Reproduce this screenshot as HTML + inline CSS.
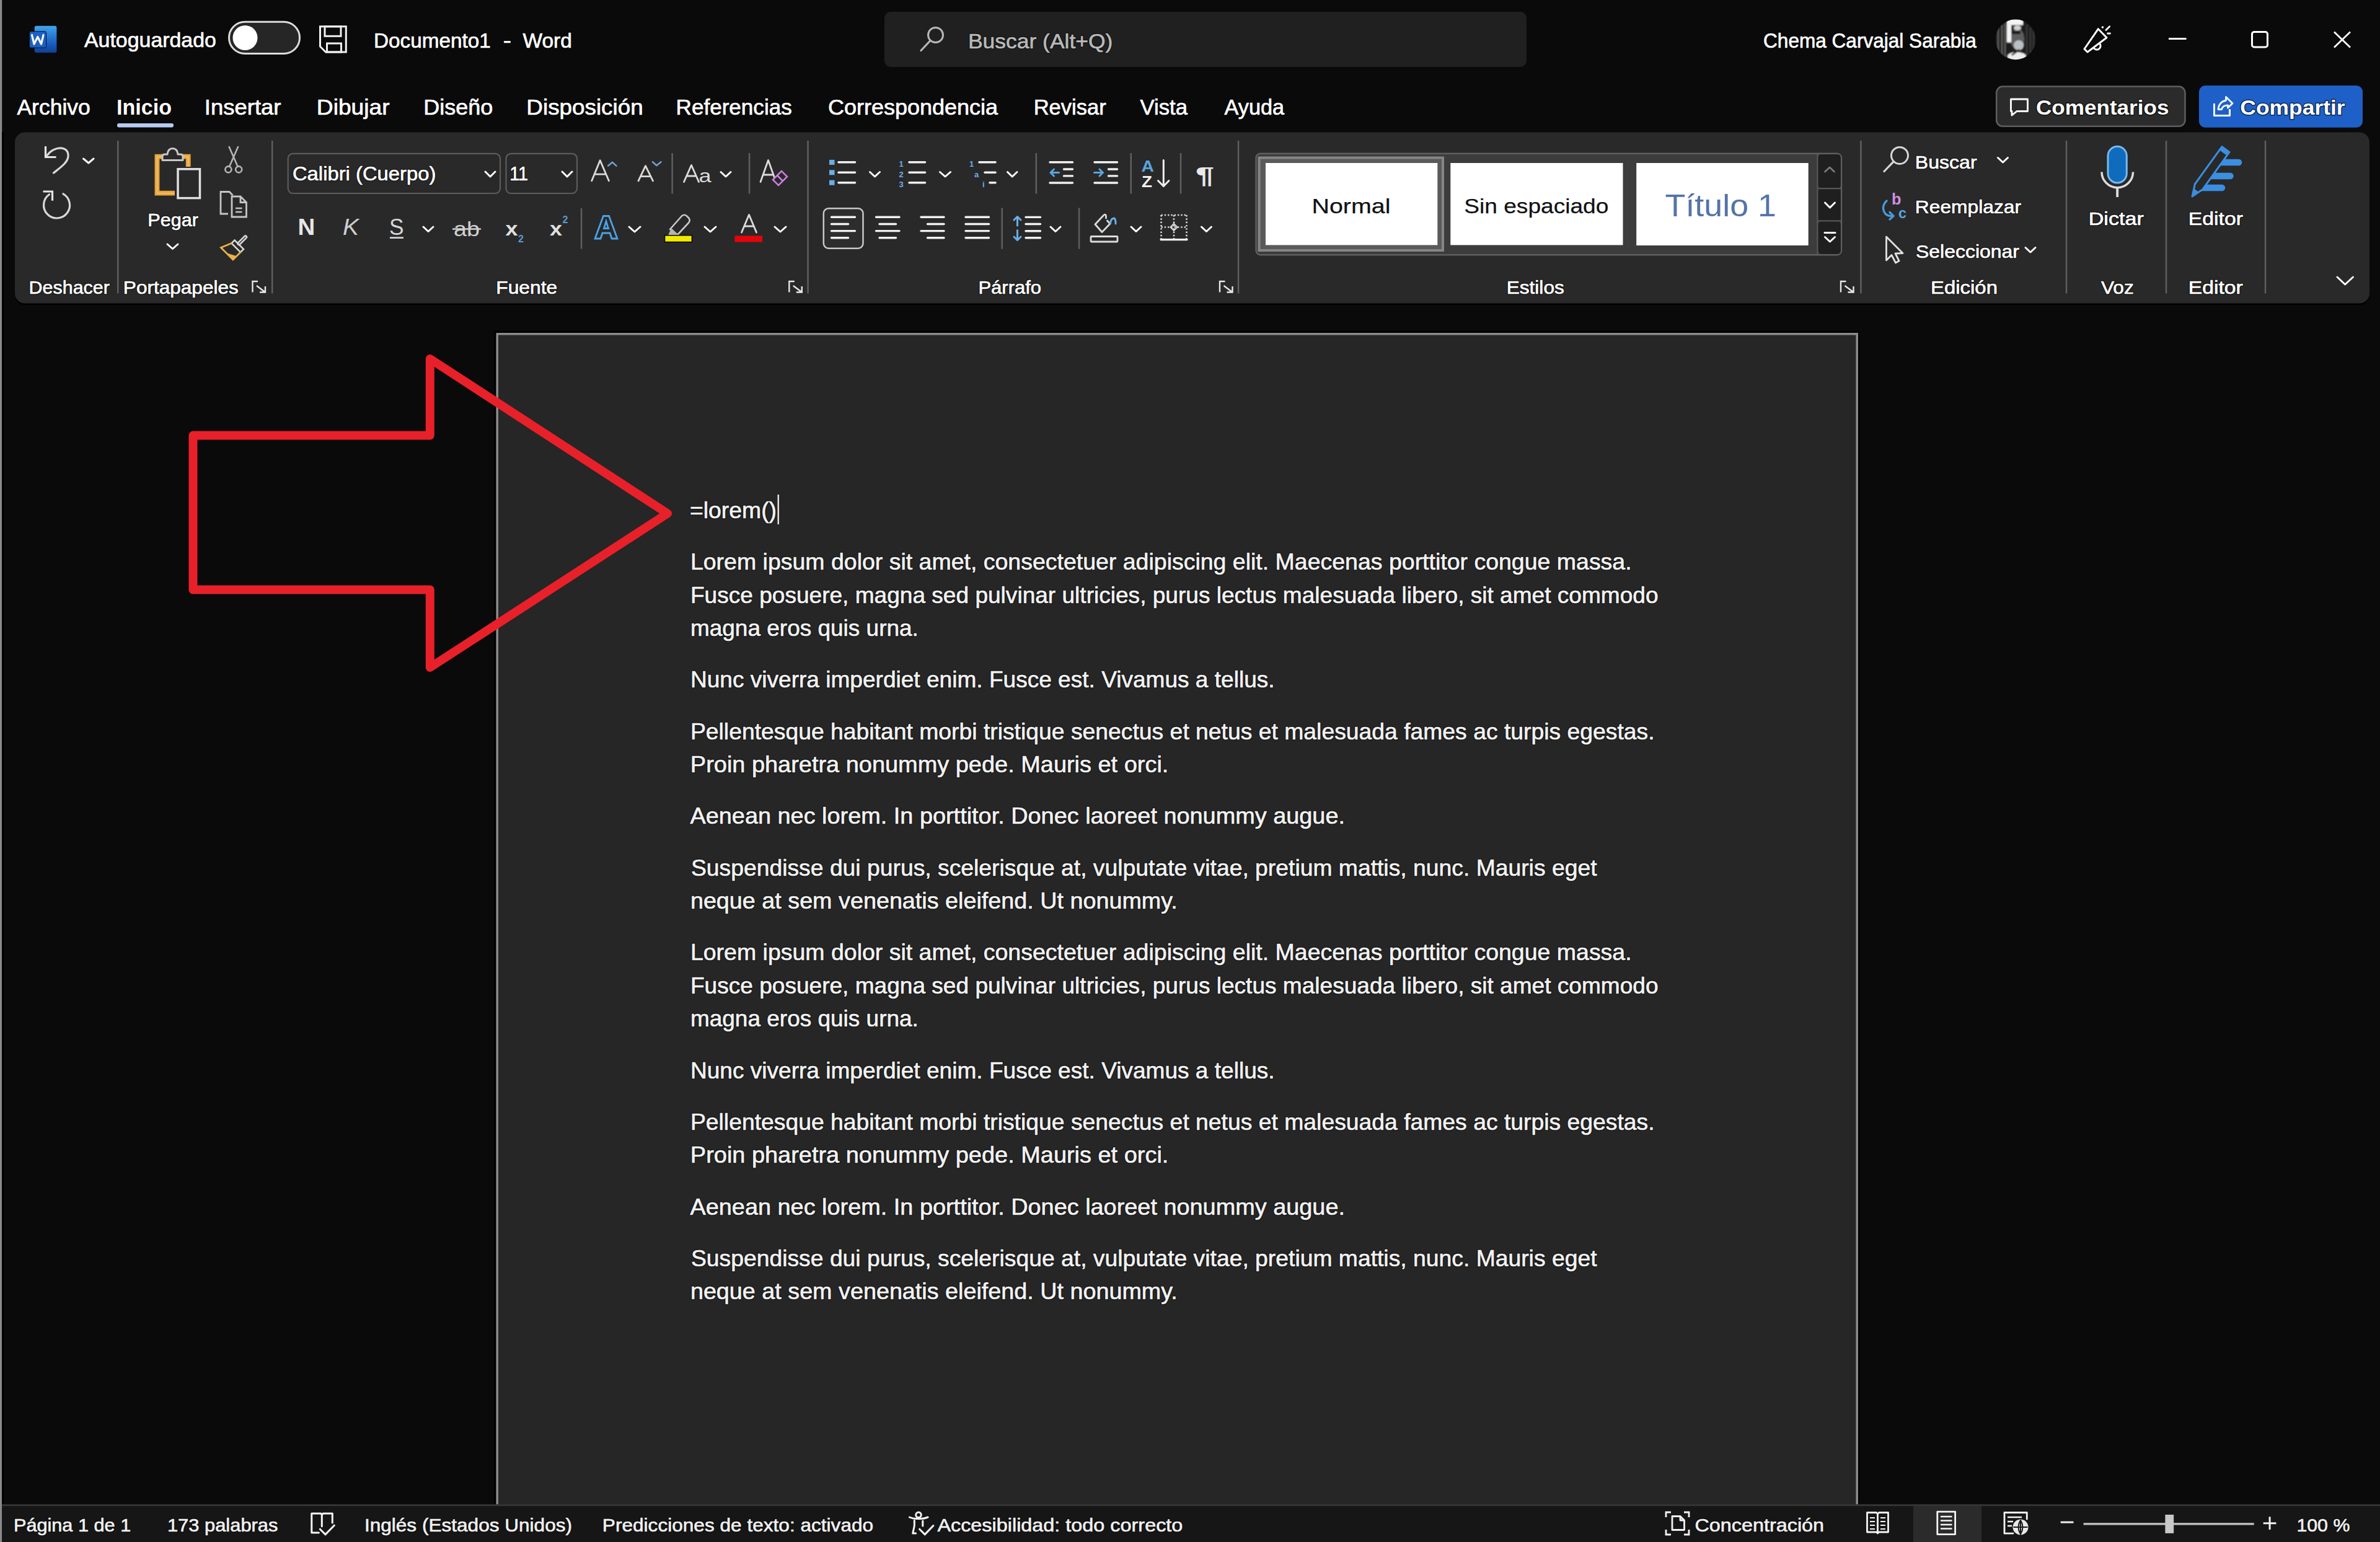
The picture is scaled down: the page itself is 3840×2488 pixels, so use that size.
<!DOCTYPE html>
<html><head><meta charset="utf-8"><title>Word</title>
<style>
html,body{margin:0;padding:0;background:#0a0a0a;width:3840px;height:2488px;overflow:hidden}
svg{position:absolute;left:0;top:0;display:block}
text{font-family:"Liberation Sans",sans-serif;white-space:pre}
</style></head><body>
<svg width="3840" height="2488" viewBox="0 0 3840 2488">
<defs>
<linearGradient id="wgrad" x1="0" y1="0" x2="0" y2="1">
<stop offset="0" stop-color="#41a5ee"/><stop offset="0.35" stop-color="#2b7cd3"/><stop offset="0.7" stop-color="#185abd"/><stop offset="1" stop-color="#103f91"/>
</linearGradient>
<radialGradient id="avgrad" cx="0.5" cy="0.45" r="0.6">
<stop offset="0" stop-color="#9a9a9a"/><stop offset="0.6" stop-color="#555"/><stop offset="1" stop-color="#222"/>
</radialGradient>
</defs>
<!-- backgrounds -->
<rect x="0" y="0" width="3840" height="2488" fill="#0a0a0a"/>
<rect x="0" y="0" width="3.2" height="2488" fill="#8a8a8a"/>
<rect x="3.2" y="213" width="3" height="2215" fill="#000"/>
<!-- ===== title bar ===== -->
<!-- word icon -->
<rect x="55.7" y="41.8" width="35.7" height="43.2" rx="3" fill="url(#wgrad)"/>
<rect x="47.5" y="50.7" width="27.1" height="26.4" rx="2.5" fill="#1d5fc2" stroke="#07122a" stroke-width="1"/>
<path d="M51.5 56.5 L55 71 L60.8 59.5 L66.5 71 L70 56.5" fill="none" stroke="#f4f8ff" stroke-width="3.2" stroke-linejoin="round" stroke-linecap="round"/>
<!-- toggle -->
<rect x="369.5" y="35.2" width="114" height="51.3" rx="25.6" fill="#262626" stroke="#dcdcdc" stroke-width="3"/>
<circle cx="395.5" cy="61" r="20" fill="#ffffff"/>
<!-- save icon -->
<path d="M516.5 42.8 H558.3 V84 H525.5 L516.5 75 Z" fill="none" stroke="#f0f0f0" stroke-width="3"/>
<rect x="524" y="42.8" width="26" height="15.5" fill="none" stroke="#f0f0f0" stroke-width="3"/>
<rect x="527.5" y="70" width="23" height="14" fill="none" stroke="#f0f0f0" stroke-width="3"/>
<!-- search box -->
<rect x="1427" y="19" width="1036" height="89" rx="10" fill="#202020"/>
<circle cx="1509.5" cy="56.5" r="12" fill="none" stroke="#b8b8b8" stroke-width="3"/>
<line x1="1501" y1="65.5" x2="1486" y2="81.5" stroke="#b8b8b8" stroke-width="3.2" stroke-linecap="round"/>
<!-- avatar -->
<clipPath id="avclip"><circle cx="3252" cy="63.8" r="32.5"/></clipPath>
<filter id="avblur" x="-10%" y="-10%" width="120%" height="120%"><feGaussianBlur stdDeviation="1.2"/></filter>
<g clip-path="url(#avclip)"><g filter="url(#avblur)">
<rect x="3218" y="30" width="68" height="68" fill="#1c1c1c"/>
<path d="M3224 45 V85 M3230 40 V90 M3235 38 V92" stroke="#5e5e5e" stroke-width="2.6"/>
<path d="M3270 40 V88 M3276 45 V85 M3281 50 V80" stroke="#3a3a3a" stroke-width="2.6"/>
<ellipse cx="3255" cy="63" rx="11" ry="17" fill="#5f5f5f"/>
<rect x="3238" y="30.5" width="26" height="10" fill="#f4f4f4"/>
<rect x="3238" y="30.5" width="7" height="38" fill="#f4f4f4"/>
<ellipse cx="3255" cy="45" rx="6" ry="4" fill="#d0d0d0"/>
<rect x="3246" y="50" width="14" height="5" fill="#1a1a1a"/>
<ellipse cx="3257" cy="73" rx="8" ry="8" fill="#b9c2c8"/>
<ellipse cx="3254" cy="91" rx="15" ry="7" fill="#ececec"/>
<path d="M3246 89 L3258 80" stroke="#111" stroke-width="2.5"/>
</g></g>
<!-- megaphone -->
<path d="M3385.4 46.7 L3363 79 L3368 84 L3399 60.7 Z" fill="none" stroke="#fff" stroke-width="3" stroke-linejoin="round"/>
<path d="M3378 77.5 A5.8 5.8 0 0 0 3388 70.5" fill="none" stroke="#fff" stroke-width="3"/>
<circle cx="3392.4" cy="44" r="1.8" fill="#fff"/>
<line x1="3397.9" y1="48.6" x2="3403.7" y2="42.8" stroke="#fff" stroke-width="2.8" stroke-linecap="round"/>
<line x1="3400.6" y1="54" x2="3404.5" y2="54" stroke="#fff" stroke-width="2.8" stroke-linecap="round"/>
<!-- window controls -->
<rect x="3499" y="61" width="28.5" height="3" fill="#fff"/>
<rect x="3633.5" y="51.5" width="25" height="24.5" rx="3.5" fill="none" stroke="#fff" stroke-width="3"/>
<path d="M3766 51.5 L3792 76.5 M3792 51.5 L3766 76.5" stroke="#fff" stroke-width="2.8"/>
<!-- tab underline -->
<rect x="189" y="199" width="91" height="6.5" rx="3" fill="#b4cbf2"/>
<!-- comentarios button -->
<rect x="3221.2" y="139.6" width="304.3" height="64.2" rx="10" fill="#2b2b2b" stroke="#5e5e5e" stroke-width="2.5"/>
<path d="M3244.5 160 H3271.5 V179.5 H3254 L3246 186 V179.5 H3244.5 Z" fill="none" stroke="#fff" stroke-width="2.8" stroke-linejoin="round"/>
<!-- compartir button -->
<rect x="3548" y="138" width="264" height="67.7" rx="10" fill="#1e60c8"/>
<path d="M3572.5 167 V186.5 H3597.5 V176" fill="none" stroke="#f2faff" stroke-width="3" stroke-linejoin="round"/>
<path d="M3579 176.5 C3579.5 168.5 3584.5 163 3591.5 162 L3591.5 156.5 L3602 166.8 L3594.5 174 V169.8 C3589 169.8 3585.5 172 3584.5 176.5 Z" fill="none" stroke="#f2faff" stroke-width="2.8" stroke-linejoin="round"/>
<!-- ===== ribbon ===== -->
<rect x="24" y="215" width="3799" height="277" rx="16" fill="#000"/>
<rect x="24" y="213.5" width="3799" height="276" rx="16" fill="#292929"/>
<g id="ribbon-seps" fill="#5f5f5f">
<rect x="189" y="227" width="2.5" height="246.5"/>
<rect x="438" y="227" width="2.5" height="246.5"/>
<rect x="1302.3" y="227" width="2.5" height="246.5"/>
<rect x="1996.8" y="227" width="2.5" height="246.5"/>
<rect x="3001.2" y="227" width="2.5" height="246.5"/>
<rect x="3332.8" y="227" width="2.5" height="246.5"/>
<rect x="3493.8" y="227" width="2.5" height="246.5"/>
<rect x="3653.8" y="227" width="2.5" height="246.5"/>
<rect x="936.8" y="336" width="2.5" height="65.5"/>
<rect x="1083.4" y="247" width="2.5" height="65.5"/>
<rect x="1207.8" y="247" width="2.5" height="65.5"/>
<rect x="1670.6" y="247" width="2.5" height="65.5"/>
<rect x="1823.5" y="247" width="2.5" height="65.5"/>
<rect x="1903.8" y="247" width="2.5" height="65.5"/>
<rect x="1615.5" y="335.5" width="2.5" height="66.2"/>
<rect x="1739.8" y="335.5" width="2.5" height="66.2"/>
</g>
<g fill="none" stroke-linecap="round" stroke-linejoin="round">
<!-- undo -->
<path d="M73.5 236 V253.5 H90.5" stroke="#e6e6e6" stroke-width="3.2" stroke-linecap="butt" stroke-linejoin="miter"/>
<path d="M75.5 251.5 C86 235, 111 234, 110 252 C109.5 262, 99 269, 86.5 279" stroke="#d9d9d9" stroke-width="3.2"/>
<path d="M134.5 256 L142.8 263 L151 256" stroke="#fff" stroke-width="3"/>
<!-- redo -->
<path d="M102 312.8 A21 21 0 1 1 79.5 313.8" stroke="#d9d9d9" stroke-width="3.2"/>
<path d="M69.5 309 H84.5 V323.7" stroke="#e6e6e6" stroke-width="3.2" stroke-linecap="butt" stroke-linejoin="miter"/>
<!-- paste -->
<path d="M282 311.7 H253.5 V252.7 H303.7 V269" stroke="#e9a53c" stroke-width="7.8" stroke-linecap="butt" stroke-linejoin="miter"/>
<path d="M282 311.7 H253.5 V252.7 H303.7 V269" stroke="#f6cf7e" stroke-width="2" stroke-linecap="butt" stroke-linejoin="miter" opacity="0.6"/>
<path d="M262 258.5 V252 Q262 249 266 249 H270 C271 241 275 239.5 278.5 239.5 C282 239.5 286 241 287 249 H291 Q295 249 295 252 V258.5 Z" stroke="#c8c8c8" stroke-width="3" fill="#292929"/>
<rect x="287" y="272.8" width="35.5" height="46.8" stroke="#e0e0e0" stroke-width="3.5" fill="#292929" stroke-linejoin="miter"/>
<path d="M270 394 L278.5 401.5 L287 394" stroke="#fff" stroke-width="3"/>
<!-- scissors -->
<path d="M369.7 237 L383.5 268.5 M384 237 L370.2 268.5" stroke="#b5b5b5" stroke-width="2.6"/>
<circle cx="368.4" cy="273.4" r="5" stroke="#b5b5b5" stroke-width="2.6"/>
<circle cx="385.2" cy="273.4" r="5" stroke="#b5b5b5" stroke-width="2.6"/>
<!-- copy -->
<path d="M368 345 H356 V309.5 H370 L375.5 315" stroke="#c4c4c4" stroke-width="2.8" stroke-linejoin="miter" stroke-linecap="butt"/>
<path d="M374 317 H388 L397.5 326.5 V350 H374 Z M388 317 V326.5 H397.5" stroke="#c4c4c4" stroke-width="2.8" stroke-linejoin="miter"/>
<path d="M380 336 H390.5 M380 342 H390.5" stroke="#c4c4c4" stroke-width="2.6" stroke-linecap="butt"/>
<!-- format painter -->
<path d="M396 382.5 L385.5 393" stroke="#d6d6d6" stroke-width="6.5"/>
<path d="M396 382.5 L385.5 393" stroke="#292929" stroke-width="1.2"/>
<path d="M378.5 387.5 L393 402 L388 407 L373.5 392.5 Z" stroke="#d6d6d6" stroke-width="2.6" stroke-linejoin="miter"/>
<path d="M373.5 392.5 L356.5 399.5 L376 419 L388 407" stroke="#e8b14a" stroke-width="2.8" stroke-linejoin="miter"/>
<path d="M365 408 L376 419 L381 413 Z" fill="#e8b14a" stroke="none"/>
<!-- dialog launchers -->
<g stroke="#e8e8e8" stroke-width="2.4" stroke-linecap="butt" stroke-linejoin="miter">
<path d="M416 454 H407.5 V471.5 M414 461 L428 471.5 M428 462 V471.5 H419"/>
<path d="M1281.8 454 H1273.3 V471.5 M1279.8 461 L1293.8 471.5 M1293.8 462 V471.5 H1284.8"/>
<path d="M1976.5 454 H1968 V471.5 M1974.5 461 L1988.5 471.5 M1988.5 462 V471.5 H1979.5"/>
<path d="M2978.5 454 H2970 V471.5 M2976.5 461 L2990.5 471.5 M2990.5 462 V471.5 H2981.5"/>
</g>
<!-- font boxes -->
<rect x="464.7" y="247.8" width="342.3" height="64.2" rx="8" stroke="#5c5c5c" stroke-width="2.2"/>
<rect x="816.5" y="247.8" width="114.5" height="64.2" rx="8" stroke="#5c5c5c" stroke-width="2.2"/>
<path d="M783 277 L791 285 L799 277" stroke="#fff" stroke-width="3"/>
<path d="M907 277 L915 285 L923 277" stroke="#fff" stroke-width="3"/>
<!-- grow/shrink font -->
<path d="M954.7 291.8 L968.2 258.8 L982.4 291.8 M960 281.2 H976.5" stroke="#dcdcdc" stroke-width="2.8"/>
<path d="M981.2 267.6 L988 261.8 L994.4 267.6" stroke="#6f9fcf" stroke-width="2.6"/>
<path d="M1030 291.8 L1041.5 267.6 L1053.5 291.8 M1035 284.7 H1048.5" stroke="#dcdcdc" stroke-width="2.8"/>
<path d="M1053 261.2 L1059.4 267 L1066.5 261.2" stroke="#6f9fcf" stroke-width="2.6"/>
<!-- Aa -->
<path d="M1103.5 293.5 L1115.5 266.5 L1127.5 293.5 M1108.5 284 H1122.5" stroke="#dcdcdc" stroke-width="2.8"/>
<path d="M1163 277.5 L1171 285 L1179 277.5" stroke="#fff" stroke-width="3"/>
<!-- clear formatting -->
<path d="M1227 293.5 L1239.5 258.5 L1252 293.5 M1232 282 H1246" stroke="#dcdcdc" stroke-width="2.8"/>
<path d="M1247 290 L1261 276 L1270 285 L1256 299 Z M1254 283 L1263 292" stroke="#c77fdc" stroke-width="2.6" stroke-linejoin="miter" fill="#292929"/>
<!-- underline chevrons row 2 -->
<path d="M683 366 L691 373.5 L699 366" stroke="#fff" stroke-width="3"/>
<path d="M1015 366 L1024 374 L1033 366" stroke="#fff" stroke-width="3"/>
<path d="M1137 366 L1146 374 L1155 366" stroke="#fff" stroke-width="3"/>
<path d="M1250 366 L1259 374 L1268 366" stroke="#fff" stroke-width="3"/>
<!-- underline S -->
<rect x="629" y="382.3" width="22" height="2.6" fill="#dcdcdc" stroke="none"/>
<!-- strikethrough -->
<path d="M731 369.5 H775" stroke="#d0d0d0" stroke-width="2.4"/>
<!-- highlighter -->
<path d="M1081 370 L1100 348.5 Q1104 345 1108 348.5 L1111.5 352 Q1114 356 1111 359.5 L1092 380" stroke="#c8c8c8" stroke-width="2.6"/>
<path d="M1083 368 L1094 378 L1084 382 L1077 382 Z" stroke="none" fill="#b5b5b5"/>
<rect x="1072.5" y="379.8" width="44" height="10.7" fill="#f2ea00" stroke="#050505" stroke-width="1.6"/>
<!-- font color -->
<path d="M1196.5 375 L1208.5 346.5 L1220.5 375 M1201 365 H1216" stroke="#dcdcdc" stroke-width="2.8"/>
<rect x="1185.4" y="380.4" width="44.6" height="10.1" fill="#e3050c" stroke="none"/>
<!-- text effects A -->
<path d="M960 385 L973.5 348.5 H982.5 L996 385 H987 L984 376 H972 L969 385 Z M974.5 368.5 H981.5 L978 357 Z" stroke="#4aa3e8" stroke-width="2.8" stroke-linejoin="miter" fill="#292929"/>
</g>
<!-- font group glyphs -->
<g font-family="Liberation Sans" fill="#e6e6e6">
<text x="480.5" y="379.4" font-size="37.5" font-weight="700" textLength="27.8" lengthAdjust="spacingAndGlyphs">N</text>
<text x="553" y="379.4" font-size="37" font-style="italic" textLength="26" lengthAdjust="spacingAndGlyphs" fill="#cfcfcf">K</text>
<text x="628" y="379.4" font-size="37" textLength="23.5" lengthAdjust="spacingAndGlyphs" fill="#d6d6d6">S</text>
<text x="732" y="380.5" font-size="34" textLength="42" lengthAdjust="spacingAndGlyphs" fill="#d0d0d0">ab</text>
<text x="815.5" y="380" font-size="32" font-weight="700" textLength="20" lengthAdjust="spacingAndGlyphs" fill="#e0e0e0">x</text>
<text x="836" y="391" font-size="16" fill="#5a9bd0" font-weight="700">2</text>
<text x="887" y="380" font-size="32" font-weight="700" textLength="20" lengthAdjust="spacingAndGlyphs" fill="#e0e0e0">x</text>
<text x="907.5" y="360" font-size="16" fill="#5a9bd0" font-weight="700">2</text>
<text x="1127.5" y="293.8" font-size="30" textLength="20" lengthAdjust="spacingAndGlyphs" fill="#dcdcdc">a</text>
</g>
<!-- ===== paragraph group ===== -->
<g fill="none" stroke-linecap="round" stroke-linejoin="round">
<!-- bullets -->
<g fill="#6aaee8" stroke="none">
<rect x="1338" y="257.9" width="8.5" height="8"/><rect x="1338" y="274.3" width="8.5" height="8"/><rect x="1338" y="290.7" width="8.5" height="8"/>
</g>
<path d="M1353 261.7 H1379.5 M1353 278.2 H1379.5 M1353 294.7 H1379.5" stroke="#f0f0f0" stroke-width="3.6"/>
<path d="M1403.5 277.5 L1411.5 285 L1419.5 277.5" stroke="#fff" stroke-width="3"/>
<path d="M1467 261.7 H1492.5 M1467 278.2 H1492.5 M1467 294.7 H1492.5" stroke="#f0f0f0" stroke-width="3.6"/>
<path d="M1516.5 277.5 L1525 285 L1533.5 277.5" stroke="#fff" stroke-width="3"/>
<path d="M1580 261.7 H1606 M1589 278.2 H1606 M1597 294.7 H1606" stroke="#f0f0f0" stroke-width="3.6"/>
<path d="M1625.5 277.5 L1633.2 285 L1641 277.5" stroke="#fff" stroke-width="3"/>
<!-- indent -->
<path d="M1694 261.7 H1730.5 M1716.5 273 H1730.5 M1716.5 283.9 H1730.5 M1694 295 H1730.5" stroke="#f0f0f0" stroke-width="3.4"/>
<path d="M1708.5 278.5 H1695 M1700.5 273 L1695 278.5 L1700.5 284" stroke="#5aa5e0" stroke-width="3"/>
<path d="M1766 261.7 H1802.5 M1788.5 273 H1802.5 M1788.5 283.9 H1802.5 M1766 295 H1802.5" stroke="#f0f0f0" stroke-width="3.4"/>
<path d="M1765.5 278.5 H1779.5 M1774 273 L1779.5 278.5 L1774 284" stroke="#5aa5e0" stroke-width="3"/>
<!-- sort -->
<path d="M1877.3 258.5 V300.5 M1868.5 291.5 L1877.3 300.5 L1886 291.5" stroke="#f0f0f0" stroke-width="3"/>
<!-- align -->
<rect x="1328.8" y="336.2" width="63.7" height="64.5" rx="8" stroke="#c8c8c8" stroke-width="2.5" fill="#2d2d2d"/>
<path d="M1341.5 350.2 H1379.5 M1341.5 361.5 H1368.5 M1341.5 372.6 H1379.5 M1341.5 383.8 H1368.5" stroke="#f0f0f0" stroke-width="3.4"/>
<path d="M1413.5 350.2 H1451 M1419 361.5 H1445.5 M1413.5 372.6 H1451 M1419 383.8 H1445.5" stroke="#f0f0f0" stroke-width="3.4"/>
<path d="M1486 350.2 H1523 M1496.5 361.5 H1523 M1486 372.6 H1523 M1496.5 383.8 H1523" stroke="#f0f0f0" stroke-width="3.4"/>
<path d="M1558 350.2 H1595.5 M1558 361.5 H1595.5 M1558 372.6 H1595.5 M1558 383.8 H1595.5" stroke="#f0f0f0" stroke-width="3.4"/>
<!-- line spacing -->
<path d="M1655 350.4 H1678.5 M1655 361.5 H1678.5 M1655 372.7 H1678.5 M1655 383.7 H1678.5" stroke="#f0f0f0" stroke-width="3.4"/>
<path d="M1641.5 349.5 V364 M1636 355 L1641.5 349.5 L1647 355 M1641.5 371.5 V387.5 M1636 382 L1641.5 387.5 L1647 382" stroke="#6aaee8" stroke-width="3"/>
<path d="M1695 366 L1703 373.5 L1711 366" stroke="#fff" stroke-width="3"/>
<!-- shading -->
<path d="M1780 348 L1767 362 L1778 374.5 L1791 361 L1786.5 356 M1784.5 352 V349 Q1784.5 345.5 1781.5 346.5" stroke="#dcdcdc" stroke-width="2.8"/>
<path d="M1791.5 361 Q1792 352 1798 352 Q1800.5 356 1800 361" stroke="#6aaee8" stroke-width="3"/>
<rect x="1760" y="381.5" width="43" height="8.5" rx="1" stroke="#dcdcdc" stroke-width="2.8"/>
<path d="M1825 366 L1833 373.5 L1841 366" stroke="#fff" stroke-width="3"/>
<!-- borders -->
<path d="M1873.5 347 H1914.5 M1873.5 366.5 H1914.5 M1873.5 347 V386 M1914.5 347 V386 M1894 347 V386" stroke="#d8d8d8" stroke-width="2.6" stroke-dasharray="2.4 2.9" stroke-linecap="butt"/>
<path d="M1894 361 L1899.5 366.5 L1894 372 L1888.5 366.5 Z" stroke="#d8d8d8" stroke-width="2.2" fill="none"/>
<path d="M1873 386.7 H1915" stroke="#f0f0f0" stroke-width="3.2"/>
<path d="M1938.5 366 L1946.5 373.5 L1954.5 366" stroke="#fff" stroke-width="3"/>
</g>
<g font-family="Liberation Sans" font-weight="700">
<text x="1450.5" y="269" font-size="13" fill="#6aaee8">1</text>
<text x="1450.5" y="285.5" font-size="13" fill="#6aaee8">2</text>
<text x="1450.5" y="302" font-size="13" fill="#6aaee8">3</text>
<text x="1564" y="269" font-size="13" fill="#6aaee8">1</text>
<text x="1572" y="285.5" font-size="13" fill="#6aaee8">a</text>
<text x="1585" y="302" font-size="13" fill="#6aaee8">i</text>
<text x="1841.5" y="276.6" font-size="26" fill="#5aa5e0" textLength="20.5" lengthAdjust="spacingAndGlyphs">A</text>
<text x="1842" y="301.8" font-size="25" fill="#f0f0f0" textLength="17" lengthAdjust="spacingAndGlyphs">Z</text>
<text x="1929" y="296" font-size="36" fill="#e8e8e8" textLength="30" lengthAdjust="spacingAndGlyphs">¶</text>
</g>
<!-- ===== styles gallery ===== -->
<rect x="2026.5" y="247.7" width="944.5" height="163.5" rx="7" fill="#3c3c3c" stroke="#5f5f5f" stroke-width="2.4"/>
<rect x="2029.5" y="252.5" width="300.5" height="153.5" fill="#868686"/>
<rect x="2033.5" y="256.5" width="292.5" height="145.5" fill="#5a5a5a"/>
<rect x="2042" y="263" width="277.3" height="132.4" fill="#ffffff"/>
<rect x="2340.3" y="263" width="278.2" height="132.4" fill="#ffffff"/>
<rect x="2640.2" y="263" width="277.5" height="133" fill="#ffffff"/>
<path d="M2932.5 249 V410" stroke="#555" stroke-width="2.4"/>
<rect x="2933.7" y="249" width="36.2" height="55" rx="5" fill="#1f1f1f"/>
<rect x="2933.7" y="305.2" width="36.2" height="50.6" fill="#1f1f1f"/>
<rect x="2933.7" y="357" width="36.2" height="53" rx="5" fill="#1f1f1f"/>
<path d="M2933.7 304.2 H2970 M2933.7 356.4 H2970" stroke="#555" stroke-width="2.2"/>
<g fill="none" stroke-linecap="round" stroke-linejoin="round">
<path d="M2944.5 277 L2952 270 L2959.5 277" stroke="#7a7a7a" stroke-width="2.8"/>
<path d="M2944.5 327 L2952.5 335 L2960.5 327" stroke="#fff" stroke-width="3"/>
<path d="M2944 375.5 H2961" stroke="#fff" stroke-width="3"/>
<path d="M2944.5 382.5 L2952.5 390 L2960.5 382.5" stroke="#fff" stroke-width="3"/>
</g>
<!-- ===== editing ===== -->
<g fill="none" stroke-linecap="round" stroke-linejoin="round">
<circle cx="3065" cy="250.9" r="13.5" stroke="#d6d6d6" stroke-width="3"/>
<path d="M3055 260.8 L3040 276.5" stroke="#d6d6d6" stroke-width="3.2"/>
<path d="M3223.5 254.5 L3231.5 262 L3239.5 254.5" stroke="#fff" stroke-width="3"/>
<path d="M3044 324 Q3034 334 3042 345 Q3046 349 3054 348.5 M3049 342.5 L3055 348.5 L3049 354" stroke="#4a9ad8" stroke-width="3.2"/>
<path d="M3268 399.5 L3276 407 L3284 399.5" stroke="#fff" stroke-width="3"/>
<path d="M3043.5 382 V420 L3052 411.5 L3058.5 424 L3064 421 L3058 409 L3070 408.5 Z" stroke="#e0e0e0" stroke-width="2.8"/>
</g>
<g font-family="Liberation Sans">
<text x="3052" y="330" font-size="26" font-weight="700" fill="#cf8fe0" textLength="15.5" lengthAdjust="spacingAndGlyphs">b</text>
<text x="3063" y="351.5" font-size="24" font-weight="700" fill="#5aa5e0" textLength="13" lengthAdjust="spacingAndGlyphs">c</text>
</g>
<!-- mic -->
<rect x="3401" y="236.3" width="30.3" height="58.8" rx="15.15" fill="#0f6cbd" stroke="#79b8ee" stroke-width="3"/>
<path d="M3391 277.4 A25 25 0 0 0 3441.5 277.4" fill="none" stroke="#dcdcdc" stroke-width="3.5"/>
<path d="M3416.2 302.5 V318" stroke="#dcdcdc" stroke-width="4"/>
<!-- editor pen -->
<g stroke-linecap="round">
<path d="M3578 262 H3612" stroke="#3b8ee0" stroke-width="10.5"/>
<path d="M3563 284 H3598.5" stroke="#3b8ee0" stroke-width="10.5"/>
<path d="M3550 303 H3585" stroke="#3b8ee0" stroke-width="10.5"/>
</g>
<path d="M3585 236.6 L3597 245.4 L3553.6 305.8 L3537 317 L3541.4 297 Z" fill="#292929" stroke="#3b8ee0" stroke-width="3" stroke-linejoin="round"/>
<path d="M3585 236.6 L3597 245.4 L3593 251 L3581 242.2 Z" fill="#3b8ee0"/>
<path d="M3537 317 L3541 305 L3547 309.5 Z" fill="#3b8ee0"/>
<!-- collapse chevron -->
<path d="M3771 447 L3783.7 459 L3796.5 447" fill="none" stroke="#fff" stroke-width="3" stroke-linecap="round" stroke-linejoin="round"/>


<!-- ===== page ===== -->
<rect x="799" y="535.5" width="2200.4" height="1910" fill="none" stroke="#000" stroke-width="3"/>
<rect x="802.2" y="538.8" width="2194" height="1900" fill="#262626" stroke="#8c8c8c" stroke-width="3.5"/>
<!-- ===== status bar ===== -->
<rect x="3.2" y="2427.3" width="3837" height="61" fill="#161616"/>
<rect x="3.2" y="2427.3" width="3837" height="2.5" fill="#3a3a3a"/>
<rect x="3087" y="2429.8" width="110" height="58.2" fill="#2b2b2b"/>
<!-- red arrow -->
<polygon points="311.5,702.6 693.8,702.6 693.8,579 1077,828.5 693.8,1077 693.8,951.5 311.5,951.5" fill="none" stroke="#e8202a" stroke-width="14" stroke-linejoin="round"/>
<!-- cursor -->
<rect x="1254.5" y="798" width="2.5" height="48" fill="#e0e0e0"/>
<!-- ===== status bar icons ===== -->
<g fill="none" stroke="#f4f4f4" stroke-width="3" stroke-linejoin="round" stroke-linecap="round">
<path d="M514.4 2472.9 H502.8 V2442 H517.8 L519.3 2444.3 L521.2 2442 H536.3 V2457 M519.3 2444.3 V2462.7"/>
<path d="M516.3 2467.2 L525 2475.9 L539.3 2461.2"/>
<circle cx="1482" cy="2444.3" r="4.3"/>
<path d="M1467.4 2448 Q1474 2451 1482 2450.3 Q1490 2451 1497.1 2448 M1475.3 2453.3 V2462 L1472.7 2474 H1477.6 M1488.8 2454 V2462"/>
<path d="M1483.6 2467.2 L1492.2 2475.9 L1505.8 2461.6"/>
<!-- focus -->
<path d="M2688 2448 V2440 H2696 M2717 2440 H2725 V2448 M2725 2468 V2476 H2717 M2696 2476 H2688 V2468" stroke-width="2.8" stroke-linecap="butt" stroke-linejoin="miter"/>
<path d="M2711 2446.5 H2698 V2468.5 H2717.5 V2453 Z M2711 2446.5 V2453 H2717.5" stroke-width="2.8"/>
<!-- read mode -->
<path d="M3012.5 2440.5 H3027.5 L3029.5 2443 L3031.5 2440.5 H3046.5 V2472 H3031.5 L3029.5 2474 L3027.5 2472 H3012.5 Z M3029.5 2443 V2472" stroke-width="2.8"/>
<path d="M3017 2449 H3025 M3017 2455 H3025 M3017 2461 H3025 M3017 2467 H3025 M3034 2449 H3042 M3034 2455 H3042 M3034 2461 H3042 M3034 2467 H3042" stroke-width="2.2" stroke-linecap="butt"/>
<!-- print layout -->
<rect x="3125.8" y="2439.2" width="28.8" height="36.4" stroke-width="2.8"/>
<path d="M3131 2447 H3149.5 M3131 2453.5 H3149.5 M3131 2460 H3149.5 M3131 2466.5 H3149.5" stroke-width="2.4" stroke-linecap="butt"/>
<!-- web layout -->
<path d="M3248 2474.2 H3234 V2440.5 H3270.3 V2451" stroke-width="2.8"/>
<path d="M3239 2448 H3262 M3239 2455 H3248 M3239 2462 H3246" stroke-width="2.4" stroke-linecap="butt"/>
</g>
<circle cx="3260" cy="2464" r="12.5" fill="#e8e8e8"/>
<path d="M3248.5 2464 H3271.5 M3260 2452.5 V2475.5 M3260 2452.5 Q3253 2464 3260 2475.5 Q3267 2464 3260 2452.5" stroke="#1a1a1a" stroke-width="2" fill="none"/>
<!-- zoom slider -->
<rect x="3324.7" y="2454.6" width="20.8" height="3" fill="#f0f0f0"/>
<rect x="3361.6" y="2457.1" width="275.1" height="3.5" fill="#bdbdbd"/>
<rect x="3493.4" y="2443.9" width="13.8" height="30" fill="#c8c8c8"/>
<path d="M3651.7 2457.7 H3672.5 M3662.1 2447.3 V2468.1" stroke="#f0f0f0" stroke-width="3"/>

<text x="136.00" y="75.50" font-size="34" fill="#ffffff"  textLength="212.91" lengthAdjust="spacingAndGlyphs" stroke="#000000" stroke-width="3.2" stroke-linejoin="round" opacity="0.55">Autoguardado</text>
<text x="136.00" y="75.50" font-size="34" fill="#ffffff" stroke="#ffffff" stroke-width="0.7" textLength="212.91" lengthAdjust="spacingAndGlyphs">Autoguardado</text>
<text x="603.04" y="77.00" font-size="34" fill="#ffffff"  textLength="188.85" lengthAdjust="spacingAndGlyphs" stroke="#000000" stroke-width="3.2" stroke-linejoin="round" opacity="0.55">Documento1</text>
<text x="603.04" y="77.00" font-size="34" fill="#ffffff" stroke="#ffffff" stroke-width="0.7" textLength="188.85" lengthAdjust="spacingAndGlyphs">Documento1</text>
<text x="811.83" y="77.00" font-size="34" fill="#ffffff"  textLength="13.21" lengthAdjust="spacingAndGlyphs" stroke="#000000" stroke-width="3.2" stroke-linejoin="round" opacity="0.55">-</text>
<text x="811.83" y="77.00" font-size="34" fill="#ffffff" stroke="#ffffff" stroke-width="0.7" textLength="13.21" lengthAdjust="spacingAndGlyphs">-</text>
<text x="843.50" y="77.00" font-size="34" fill="#ffffff"  textLength="79.38" lengthAdjust="spacingAndGlyphs" stroke="#000000" stroke-width="3.2" stroke-linejoin="round" opacity="0.55">Word</text>
<text x="843.50" y="77.00" font-size="34" fill="#ffffff" stroke="#ffffff" stroke-width="0.7" textLength="79.38" lengthAdjust="spacingAndGlyphs">Word</text>
<text x="1561.91" y="77.70" font-size="34" fill="#b8b8b8"  textLength="233.46" lengthAdjust="spacingAndGlyphs" stroke="#000000" stroke-width="3.2" stroke-linejoin="round" opacity="0.55">Buscar (Alt+Q)</text>
<text x="1561.91" y="77.70" font-size="34" fill="#b8b8b8" stroke="#b8b8b8" stroke-width="0.7" textLength="233.46" lengthAdjust="spacingAndGlyphs">Buscar (Alt+Q)</text>
<text x="2845.07" y="77.20" font-size="34" fill="#ffffff"  textLength="343.84" lengthAdjust="spacingAndGlyphs" stroke="#000000" stroke-width="3.2" stroke-linejoin="round" opacity="0.55">Chema Carvajal Sarabia</text>
<text x="2845.07" y="77.20" font-size="34" fill="#ffffff" stroke="#ffffff" stroke-width="0.7" textLength="343.84" lengthAdjust="spacingAndGlyphs">Chema Carvajal Sarabia</text>
<text x="27.40" y="185.30" font-size="34.5" fill="#ffffff"  textLength="118.42" lengthAdjust="spacingAndGlyphs" stroke="#000000" stroke-width="3.2" stroke-linejoin="round" opacity="0.55">Archivo</text>
<text x="27.40" y="185.30" font-size="34.5" fill="#ffffff" stroke="#ffffff" stroke-width="0.7" textLength="118.42" lengthAdjust="spacingAndGlyphs">Archivo</text>
<text x="329.83" y="185.30" font-size="34.5" fill="#ffffff"  textLength="123.69" lengthAdjust="spacingAndGlyphs" stroke="#000000" stroke-width="3.2" stroke-linejoin="round" opacity="0.55">Insertar</text>
<text x="329.83" y="185.30" font-size="34.5" fill="#ffffff" stroke="#ffffff" stroke-width="0.7" textLength="123.69" lengthAdjust="spacingAndGlyphs">Insertar</text>
<text x="510.85" y="185.30" font-size="34.5" fill="#ffffff"  textLength="117.68" lengthAdjust="spacingAndGlyphs" stroke="#000000" stroke-width="3.2" stroke-linejoin="round" opacity="0.55">Dibujar</text>
<text x="510.85" y="185.30" font-size="34.5" fill="#ffffff" stroke="#ffffff" stroke-width="0.7" textLength="117.68" lengthAdjust="spacingAndGlyphs">Dibujar</text>
<text x="683.21" y="185.30" font-size="34.5" fill="#ffffff"  textLength="112.02" lengthAdjust="spacingAndGlyphs" stroke="#000000" stroke-width="3.2" stroke-linejoin="round" opacity="0.55">Diseño</text>
<text x="683.21" y="185.30" font-size="34.5" fill="#ffffff" stroke="#ffffff" stroke-width="0.7" textLength="112.02" lengthAdjust="spacingAndGlyphs">Diseño</text>
<text x="849.37" y="185.30" font-size="34.5" fill="#ffffff"  textLength="188.27" lengthAdjust="spacingAndGlyphs" stroke="#000000" stroke-width="3.2" stroke-linejoin="round" opacity="0.55">Disposición</text>
<text x="849.37" y="185.30" font-size="34.5" fill="#ffffff" stroke="#ffffff" stroke-width="0.7" textLength="188.27" lengthAdjust="spacingAndGlyphs">Disposición</text>
<text x="1090.57" y="185.30" font-size="34.5" fill="#ffffff"  textLength="187.20" lengthAdjust="spacingAndGlyphs" stroke="#000000" stroke-width="3.2" stroke-linejoin="round" opacity="0.55">Referencias</text>
<text x="1090.57" y="185.30" font-size="34.5" fill="#ffffff" stroke="#ffffff" stroke-width="0.7" textLength="187.20" lengthAdjust="spacingAndGlyphs">Referencias</text>
<text x="1335.96" y="185.30" font-size="34.5" fill="#ffffff"  textLength="274.20" lengthAdjust="spacingAndGlyphs" stroke="#000000" stroke-width="3.2" stroke-linejoin="round" opacity="0.55">Correspondencia</text>
<text x="1335.96" y="185.30" font-size="34.5" fill="#ffffff" stroke="#ffffff" stroke-width="0.7" textLength="274.20" lengthAdjust="spacingAndGlyphs">Correspondencia</text>
<text x="1667.70" y="185.30" font-size="34.5" fill="#ffffff"  stroke="#000000" stroke-width="3.2" stroke-linejoin="round" opacity="0.55">Revisar</text>
<text x="1667.70" y="185.30" font-size="34.5" fill="#ffffff" stroke="#ffffff" stroke-width="0.7">Revisar</text>
<text x="1839.50" y="185.30" font-size="34.5" fill="#ffffff"  textLength="76.48" lengthAdjust="spacingAndGlyphs" stroke="#000000" stroke-width="3.2" stroke-linejoin="round" opacity="0.55">Vista</text>
<text x="1839.50" y="185.30" font-size="34.5" fill="#ffffff" stroke="#ffffff" stroke-width="0.7" textLength="76.48" lengthAdjust="spacingAndGlyphs">Vista</text>
<text x="1975.60" y="185.30" font-size="34.5" fill="#ffffff"  textLength="96.59" lengthAdjust="spacingAndGlyphs" stroke="#000000" stroke-width="3.2" stroke-linejoin="round" opacity="0.55">Ayuda</text>
<text x="1975.60" y="185.30" font-size="34.5" fill="#ffffff" stroke="#ffffff" stroke-width="0.7" textLength="96.59" lengthAdjust="spacingAndGlyphs">Ayuda</text>
<text x="188.02" y="185.30" font-size="34.5" fill="#ffffff" font-weight="700" textLength="89.04" lengthAdjust="spacingAndGlyphs" stroke="#000000" stroke-width="3.2" stroke-linejoin="round" opacity="0.55">Inicio</text>
<text x="188.02" y="185.30" font-size="34.5" fill="#ffffff" font-weight="700" textLength="89.04" lengthAdjust="spacingAndGlyphs">Inicio</text>
<text x="3284.97" y="184.70" font-size="34" fill="#ffffff" font-weight="700" textLength="214.47" lengthAdjust="spacingAndGlyphs" stroke="#000000" stroke-width="3.2" stroke-linejoin="round" opacity="0.55">Comentarios</text>
<text x="3284.97" y="184.70" font-size="34" fill="#ffffff" font-weight="700" textLength="214.47" lengthAdjust="spacingAndGlyphs">Comentarios</text>
<text x="3614.36" y="184.70" font-size="34" fill="#ffffff" font-weight="700" textLength="169.28" lengthAdjust="spacingAndGlyphs" stroke="#000000" stroke-width="3.2" stroke-linejoin="round" opacity="0.55">Compartir</text>
<text x="3614.36" y="184.70" font-size="34" fill="#ffffff" font-weight="700" textLength="169.28" lengthAdjust="spacingAndGlyphs">Compartir</text>
<text x="46.64" y="473.50" font-size="29.5" fill="#ffffff"  textLength="130.18" lengthAdjust="spacingAndGlyphs" stroke="#000000" stroke-width="3.2" stroke-linejoin="round" opacity="0.55">Deshacer</text>
<text x="46.64" y="473.50" font-size="29.5" fill="#ffffff" stroke="#ffffff" stroke-width="0.7" textLength="130.18" lengthAdjust="spacingAndGlyphs">Deshacer</text>
<text x="198.86" y="473.50" font-size="29.5" fill="#ffffff"  textLength="185.94" lengthAdjust="spacingAndGlyphs" stroke="#000000" stroke-width="3.2" stroke-linejoin="round" opacity="0.55">Portapapeles</text>
<text x="198.86" y="473.50" font-size="29.5" fill="#ffffff" stroke="#ffffff" stroke-width="0.7" textLength="185.94" lengthAdjust="spacingAndGlyphs">Portapapeles</text>
<text x="800.24" y="473.50" font-size="29.5" fill="#ffffff"  textLength="98.99" lengthAdjust="spacingAndGlyphs" stroke="#000000" stroke-width="3.2" stroke-linejoin="round" opacity="0.55">Fuente</text>
<text x="800.24" y="473.50" font-size="29.5" fill="#ffffff" stroke="#ffffff" stroke-width="0.7" textLength="98.99" lengthAdjust="spacingAndGlyphs">Fuente</text>
<text x="1578.40" y="473.50" font-size="29.5" fill="#ffffff"  textLength="101.73" lengthAdjust="spacingAndGlyphs" stroke="#000000" stroke-width="3.2" stroke-linejoin="round" opacity="0.55">Párrafo</text>
<text x="1578.40" y="473.50" font-size="29.5" fill="#ffffff" stroke="#ffffff" stroke-width="0.7" textLength="101.73" lengthAdjust="spacingAndGlyphs">Párrafo</text>
<text x="2430.66" y="473.50" font-size="29.5" fill="#ffffff"  textLength="93.15" lengthAdjust="spacingAndGlyphs" stroke="#000000" stroke-width="3.2" stroke-linejoin="round" opacity="0.55">Estilos</text>
<text x="2430.66" y="473.50" font-size="29.5" fill="#ffffff" stroke="#ffffff" stroke-width="0.7" textLength="93.15" lengthAdjust="spacingAndGlyphs">Estilos</text>
<text x="3115.07" y="473.50" font-size="29.5" fill="#ffffff"  textLength="107.90" lengthAdjust="spacingAndGlyphs" stroke="#000000" stroke-width="3.2" stroke-linejoin="round" opacity="0.55">Edición</text>
<text x="3115.07" y="473.50" font-size="29.5" fill="#ffffff" stroke="#ffffff" stroke-width="0.7" textLength="107.90" lengthAdjust="spacingAndGlyphs">Edición</text>
<text x="3390.00" y="473.50" font-size="29.5" fill="#ffffff"  textLength="52.80" lengthAdjust="spacingAndGlyphs" stroke="#000000" stroke-width="3.2" stroke-linejoin="round" opacity="0.55">Voz</text>
<text x="3390.00" y="473.50" font-size="29.5" fill="#ffffff" stroke="#ffffff" stroke-width="0.7" textLength="52.80" lengthAdjust="spacingAndGlyphs">Voz</text>
<text x="3530.71" y="473.50" font-size="29.5" fill="#ffffff"  textLength="88.08" lengthAdjust="spacingAndGlyphs" stroke="#000000" stroke-width="3.2" stroke-linejoin="round" opacity="0.55">Editor</text>
<text x="3530.71" y="473.50" font-size="29.5" fill="#ffffff" stroke="#ffffff" stroke-width="0.7" textLength="88.08" lengthAdjust="spacingAndGlyphs">Editor</text>
<text x="238.33" y="365.30" font-size="29.5" fill="#ffffff"  textLength="81.49" lengthAdjust="spacingAndGlyphs" stroke="#000000" stroke-width="3.2" stroke-linejoin="round" opacity="0.55">Pegar</text>
<text x="238.33" y="365.30" font-size="29.5" fill="#ffffff" stroke="#ffffff" stroke-width="0.7" textLength="81.49" lengthAdjust="spacingAndGlyphs">Pegar</text>
<text x="471.94" y="291.00" font-size="31" fill="#ffffff"  textLength="231.46" lengthAdjust="spacingAndGlyphs" stroke="#000000" stroke-width="3.2" stroke-linejoin="round" opacity="0.55">Calibri (Cuerpo)</text>
<text x="471.94" y="291.00" font-size="31" fill="#ffffff" stroke="#ffffff" stroke-width="0.7" textLength="231.46" lengthAdjust="spacingAndGlyphs">Calibri (Cuerpo)</text>
<text x="822.13" y="291.00" font-size="31" fill="#ffffff"  textLength="30.02" lengthAdjust="spacingAndGlyphs" stroke="#000000" stroke-width="3.2" stroke-linejoin="round" opacity="0.55">11</text>
<text x="822.13" y="291.00" font-size="31" fill="#ffffff" stroke="#ffffff" stroke-width="0.7" textLength="30.02" lengthAdjust="spacingAndGlyphs">11</text>
<text x="3089.86" y="272.30" font-size="30" fill="#ffffff"  textLength="99.73" lengthAdjust="spacingAndGlyphs" stroke="#000000" stroke-width="3.2" stroke-linejoin="round" opacity="0.55">Buscar</text>
<text x="3089.86" y="272.30" font-size="30" fill="#ffffff" stroke="#ffffff" stroke-width="0.7" textLength="99.73" lengthAdjust="spacingAndGlyphs">Buscar</text>
<text x="3089.88" y="343.80" font-size="30" fill="#ffffff"  textLength="171.11" lengthAdjust="spacingAndGlyphs" stroke="#000000" stroke-width="3.2" stroke-linejoin="round" opacity="0.55">Reemplazar</text>
<text x="3089.88" y="343.80" font-size="30" fill="#ffffff" stroke="#ffffff" stroke-width="0.7" textLength="171.11" lengthAdjust="spacingAndGlyphs">Reemplazar</text>
<text x="3090.93" y="416.00" font-size="30" fill="#ffffff"  textLength="167.06" lengthAdjust="spacingAndGlyphs" stroke="#000000" stroke-width="3.2" stroke-linejoin="round" opacity="0.55">Seleccionar</text>
<text x="3090.93" y="416.00" font-size="30" fill="#ffffff" stroke="#ffffff" stroke-width="0.7" textLength="167.06" lengthAdjust="spacingAndGlyphs">Seleccionar</text>
<text x="3369.73" y="363.40" font-size="30" fill="#ffffff"  textLength="89.06" lengthAdjust="spacingAndGlyphs" stroke="#000000" stroke-width="3.2" stroke-linejoin="round" opacity="0.55">Dictar</text>
<text x="3369.73" y="363.40" font-size="30" fill="#ffffff" stroke="#ffffff" stroke-width="0.7" textLength="89.06" lengthAdjust="spacingAndGlyphs">Dictar</text>
<text x="3530.75" y="363.40" font-size="30" fill="#ffffff"  textLength="88.24" lengthAdjust="spacingAndGlyphs" stroke="#000000" stroke-width="3.2" stroke-linejoin="round" opacity="0.55">Editor</text>
<text x="3530.75" y="363.40" font-size="30" fill="#ffffff" stroke="#ffffff" stroke-width="0.7" textLength="88.24" lengthAdjust="spacingAndGlyphs">Editor</text>
<text x="2116.48" y="343.80" font-size="34" fill="#111111" stroke="#111111" stroke-width="0.25" textLength="126.92" lengthAdjust="spacingAndGlyphs">Normal</text>
<text x="2362.31" y="343.80" font-size="34" fill="#111111" stroke="#111111" stroke-width="0.25" textLength="233.08" lengthAdjust="spacingAndGlyphs">Sin espaciado</text>
<text x="2686.52" y="349.30" font-size="50" fill="#5573a8" textLength="179.42" lengthAdjust="spacingAndGlyphs">Título 1</text>
<text x="21.96" y="2470.50" font-size="30" fill="#f0f0f0"  textLength="189.24" lengthAdjust="spacingAndGlyphs" stroke="#000000" stroke-width="3.2" stroke-linejoin="round" opacity="0.55">Página 1 de 1</text>
<text x="21.96" y="2470.50" font-size="30" fill="#f0f0f0" stroke="#f0f0f0" stroke-width="0.7" textLength="189.24" lengthAdjust="spacingAndGlyphs">Página 1 de 1</text>
<text x="269.94" y="2470.50" font-size="30" fill="#f0f0f0"  textLength="178.49" lengthAdjust="spacingAndGlyphs" stroke="#000000" stroke-width="3.2" stroke-linejoin="round" opacity="0.55">173 palabras</text>
<text x="269.94" y="2470.50" font-size="30" fill="#f0f0f0" stroke="#f0f0f0" stroke-width="0.7" textLength="178.49" lengthAdjust="spacingAndGlyphs">173 palabras</text>
<text x="587.90" y="2470.50" font-size="30" fill="#f0f0f0"  textLength="335.15" lengthAdjust="spacingAndGlyphs" stroke="#000000" stroke-width="3.2" stroke-linejoin="round" opacity="0.55">Inglés (Estados Unidos)</text>
<text x="587.90" y="2470.50" font-size="30" fill="#f0f0f0" stroke="#f0f0f0" stroke-width="0.7" textLength="335.15" lengthAdjust="spacingAndGlyphs">Inglés (Estados Unidos)</text>
<text x="971.89" y="2470.50" font-size="30" fill="#f0f0f0"  textLength="437.23" lengthAdjust="spacingAndGlyphs" stroke="#000000" stroke-width="3.2" stroke-linejoin="round" opacity="0.55">Predicciones de texto: activado</text>
<text x="971.89" y="2470.50" font-size="30" fill="#f0f0f0" stroke="#f0f0f0" stroke-width="0.7" textLength="437.23" lengthAdjust="spacingAndGlyphs">Predicciones de texto: activado</text>
<text x="1512.40" y="2470.50" font-size="30" fill="#f0f0f0"  textLength="395.94" lengthAdjust="spacingAndGlyphs" stroke="#000000" stroke-width="3.2" stroke-linejoin="round" opacity="0.55">Accesibilidad: todo correcto</text>
<text x="1512.40" y="2470.50" font-size="30" fill="#f0f0f0" stroke="#f0f0f0" stroke-width="0.7" textLength="395.94" lengthAdjust="spacingAndGlyphs">Accesibilidad: todo correcto</text>
<text x="2734.42" y="2470.50" font-size="30" fill="#f0f0f0"  textLength="208.70" lengthAdjust="spacingAndGlyphs" stroke="#000000" stroke-width="3.2" stroke-linejoin="round" opacity="0.55">Concentración</text>
<text x="2734.42" y="2470.50" font-size="30" fill="#f0f0f0" stroke="#f0f0f0" stroke-width="0.7" textLength="208.70" lengthAdjust="spacingAndGlyphs">Concentración</text>
<text x="3705.38" y="2470.50" font-size="30" fill="#f0f0f0"  textLength="86.00" lengthAdjust="spacingAndGlyphs" stroke="#000000" stroke-width="3.2" stroke-linejoin="round" opacity="0.55">100 %</text>
<text x="3705.38" y="2470.50" font-size="30" fill="#f0f0f0" stroke="#f0f0f0" stroke-width="0.7" textLength="86.00" lengthAdjust="spacingAndGlyphs">100 %</text>
<text x="1112.96" y="836.00" font-size="36" fill="#f2f2f2"  textLength="140.10" lengthAdjust="spacingAndGlyphs" stroke="#000000" stroke-width="3.2" stroke-linejoin="round" opacity="0.55">=lorem()</text>
<text x="1112.96" y="836.00" font-size="36" fill="#f2f2f2" stroke="#f2f2f2" stroke-width="0.7" textLength="140.10" lengthAdjust="spacingAndGlyphs">=lorem()</text>
<text x="1113.92" y="919.30" font-size="36" fill="#f2f2f2"  textLength="1518.71" lengthAdjust="spacingAndGlyphs" stroke="#000000" stroke-width="3.2" stroke-linejoin="round" opacity="0.55">Lorem ipsum dolor sit amet, consectetuer adipiscing elit. Maecenas porttitor congue massa.</text>
<text x="1113.92" y="919.30" font-size="36" fill="#f2f2f2" stroke="#f2f2f2" stroke-width="0.7" textLength="1518.71" lengthAdjust="spacingAndGlyphs">Lorem ipsum dolor sit amet, consectetuer adipiscing elit. Maecenas porttitor congue massa.</text>
<text x="1113.94" y="972.70" font-size="36" fill="#f2f2f2"  textLength="1561.61" lengthAdjust="spacingAndGlyphs" stroke="#000000" stroke-width="3.2" stroke-linejoin="round" opacity="0.55">Fusce posuere, magna sed pulvinar ultricies, purus lectus malesuada libero, sit amet commodo</text>
<text x="1113.94" y="972.70" font-size="36" fill="#f2f2f2" stroke="#f2f2f2" stroke-width="0.7" textLength="1561.61" lengthAdjust="spacingAndGlyphs">Fusce posuere, magna sed pulvinar ultricies, purus lectus malesuada libero, sit amet commodo</text>
<text x="1113.95" y="1026.10" font-size="36" fill="#f2f2f2"  textLength="367.94" lengthAdjust="spacingAndGlyphs" stroke="#000000" stroke-width="3.2" stroke-linejoin="round" opacity="0.55">magna eros quis urna.</text>
<text x="1113.95" y="1026.10" font-size="36" fill="#f2f2f2" stroke="#f2f2f2" stroke-width="0.7" textLength="367.94" lengthAdjust="spacingAndGlyphs">magna eros quis urna.</text>
<text x="1113.94" y="1109.40" font-size="36" fill="#f2f2f2"  textLength="942.65" lengthAdjust="spacingAndGlyphs" stroke="#000000" stroke-width="3.2" stroke-linejoin="round" opacity="0.55">Nunc viverra imperdiet enim. Fusce est. Vivamus a tellus.</text>
<text x="1113.94" y="1109.40" font-size="36" fill="#f2f2f2" stroke="#f2f2f2" stroke-width="0.7" textLength="942.65" lengthAdjust="spacingAndGlyphs">Nunc viverra imperdiet enim. Fusce est. Vivamus a tellus.</text>
<text x="1113.93" y="1192.70" font-size="36" fill="#f2f2f2"  textLength="1555.68" lengthAdjust="spacingAndGlyphs" stroke="#000000" stroke-width="3.2" stroke-linejoin="round" opacity="0.55">Pellentesque habitant morbi tristique senectus et netus et malesuada fames ac turpis egestas.</text>
<text x="1113.93" y="1192.70" font-size="36" fill="#f2f2f2" stroke="#f2f2f2" stroke-width="0.7" textLength="1555.68" lengthAdjust="spacingAndGlyphs">Pellentesque habitant morbi tristique senectus et netus et malesuada fames ac turpis egestas.</text>
<text x="1113.89" y="1246.10" font-size="36" fill="#f2f2f2"  textLength="771.47" lengthAdjust="spacingAndGlyphs" stroke="#000000" stroke-width="3.2" stroke-linejoin="round" opacity="0.55">Proin pharetra nonummy pede. Mauris et orci.</text>
<text x="1113.89" y="1246.10" font-size="36" fill="#f2f2f2" stroke="#f2f2f2" stroke-width="0.7" textLength="771.47" lengthAdjust="spacingAndGlyphs">Proin pharetra nonummy pede. Mauris et orci.</text>
<text x="1113.50" y="1329.40" font-size="36" fill="#f2f2f2"  textLength="1056.46" lengthAdjust="spacingAndGlyphs" stroke="#000000" stroke-width="3.2" stroke-linejoin="round" opacity="0.55">Aenean nec lorem. In porttitor. Donec laoreet nonummy augue.</text>
<text x="1113.50" y="1329.40" font-size="36" fill="#f2f2f2" stroke="#f2f2f2" stroke-width="0.7" textLength="1056.46" lengthAdjust="spacingAndGlyphs">Aenean nec lorem. In porttitor. Donec laoreet nonummy augue.</text>
<text x="1114.96" y="1412.70" font-size="36" fill="#f2f2f2"  textLength="1461.54" lengthAdjust="spacingAndGlyphs" stroke="#000000" stroke-width="3.2" stroke-linejoin="round" opacity="0.55">Suspendisse dui purus, scelerisque at, vulputate vitae, pretium mattis, nunc. Mauris eget</text>
<text x="1114.96" y="1412.70" font-size="36" fill="#f2f2f2" stroke="#f2f2f2" stroke-width="0.7" textLength="1461.54" lengthAdjust="spacingAndGlyphs">Suspendisse dui purus, scelerisque at, vulputate vitae, pretium mattis, nunc. Mauris eget</text>
<text x="1113.90" y="1466.10" font-size="36" fill="#f2f2f2"  textLength="785.94" lengthAdjust="spacingAndGlyphs" stroke="#000000" stroke-width="3.2" stroke-linejoin="round" opacity="0.55">neque at sem venenatis eleifend. Ut nonummy.</text>
<text x="1113.90" y="1466.10" font-size="36" fill="#f2f2f2" stroke="#f2f2f2" stroke-width="0.7" textLength="785.94" lengthAdjust="spacingAndGlyphs">neque at sem venenatis eleifend. Ut nonummy.</text>
<text x="1113.92" y="1549.40" font-size="36" fill="#f2f2f2"  textLength="1518.71" lengthAdjust="spacingAndGlyphs" stroke="#000000" stroke-width="3.2" stroke-linejoin="round" opacity="0.55">Lorem ipsum dolor sit amet, consectetuer adipiscing elit. Maecenas porttitor congue massa.</text>
<text x="1113.92" y="1549.40" font-size="36" fill="#f2f2f2" stroke="#f2f2f2" stroke-width="0.7" textLength="1518.71" lengthAdjust="spacingAndGlyphs">Lorem ipsum dolor sit amet, consectetuer adipiscing elit. Maecenas porttitor congue massa.</text>
<text x="1113.94" y="1602.80" font-size="36" fill="#f2f2f2"  textLength="1561.61" lengthAdjust="spacingAndGlyphs" stroke="#000000" stroke-width="3.2" stroke-linejoin="round" opacity="0.55">Fusce posuere, magna sed pulvinar ultricies, purus lectus malesuada libero, sit amet commodo</text>
<text x="1113.94" y="1602.80" font-size="36" fill="#f2f2f2" stroke="#f2f2f2" stroke-width="0.7" textLength="1561.61" lengthAdjust="spacingAndGlyphs">Fusce posuere, magna sed pulvinar ultricies, purus lectus malesuada libero, sit amet commodo</text>
<text x="1113.95" y="1656.20" font-size="36" fill="#f2f2f2"  textLength="367.94" lengthAdjust="spacingAndGlyphs" stroke="#000000" stroke-width="3.2" stroke-linejoin="round" opacity="0.55">magna eros quis urna.</text>
<text x="1113.95" y="1656.20" font-size="36" fill="#f2f2f2" stroke="#f2f2f2" stroke-width="0.7" textLength="367.94" lengthAdjust="spacingAndGlyphs">magna eros quis urna.</text>
<text x="1113.94" y="1739.50" font-size="36" fill="#f2f2f2"  textLength="942.65" lengthAdjust="spacingAndGlyphs" stroke="#000000" stroke-width="3.2" stroke-linejoin="round" opacity="0.55">Nunc viverra imperdiet enim. Fusce est. Vivamus a tellus.</text>
<text x="1113.94" y="1739.50" font-size="36" fill="#f2f2f2" stroke="#f2f2f2" stroke-width="0.7" textLength="942.65" lengthAdjust="spacingAndGlyphs">Nunc viverra imperdiet enim. Fusce est. Vivamus a tellus.</text>
<text x="1113.93" y="1822.80" font-size="36" fill="#f2f2f2"  textLength="1555.68" lengthAdjust="spacingAndGlyphs" stroke="#000000" stroke-width="3.2" stroke-linejoin="round" opacity="0.55">Pellentesque habitant morbi tristique senectus et netus et malesuada fames ac turpis egestas.</text>
<text x="1113.93" y="1822.80" font-size="36" fill="#f2f2f2" stroke="#f2f2f2" stroke-width="0.7" textLength="1555.68" lengthAdjust="spacingAndGlyphs">Pellentesque habitant morbi tristique senectus et netus et malesuada fames ac turpis egestas.</text>
<text x="1113.89" y="1876.20" font-size="36" fill="#f2f2f2"  textLength="771.47" lengthAdjust="spacingAndGlyphs" stroke="#000000" stroke-width="3.2" stroke-linejoin="round" opacity="0.55">Proin pharetra nonummy pede. Mauris et orci.</text>
<text x="1113.89" y="1876.20" font-size="36" fill="#f2f2f2" stroke="#f2f2f2" stroke-width="0.7" textLength="771.47" lengthAdjust="spacingAndGlyphs">Proin pharetra nonummy pede. Mauris et orci.</text>
<text x="1113.50" y="1959.50" font-size="36" fill="#f2f2f2"  textLength="1056.46" lengthAdjust="spacingAndGlyphs" stroke="#000000" stroke-width="3.2" stroke-linejoin="round" opacity="0.55">Aenean nec lorem. In porttitor. Donec laoreet nonummy augue.</text>
<text x="1113.50" y="1959.50" font-size="36" fill="#f2f2f2" stroke="#f2f2f2" stroke-width="0.7" textLength="1056.46" lengthAdjust="spacingAndGlyphs">Aenean nec lorem. In porttitor. Donec laoreet nonummy augue.</text>
<text x="1114.96" y="2042.80" font-size="36" fill="#f2f2f2"  textLength="1461.54" lengthAdjust="spacingAndGlyphs" stroke="#000000" stroke-width="3.2" stroke-linejoin="round" opacity="0.55">Suspendisse dui purus, scelerisque at, vulputate vitae, pretium mattis, nunc. Mauris eget</text>
<text x="1114.96" y="2042.80" font-size="36" fill="#f2f2f2" stroke="#f2f2f2" stroke-width="0.7" textLength="1461.54" lengthAdjust="spacingAndGlyphs">Suspendisse dui purus, scelerisque at, vulputate vitae, pretium mattis, nunc. Mauris eget</text>
<text x="1113.90" y="2096.20" font-size="36" fill="#f2f2f2"  textLength="785.94" lengthAdjust="spacingAndGlyphs" stroke="#000000" stroke-width="3.2" stroke-linejoin="round" opacity="0.55">neque at sem venenatis eleifend. Ut nonummy.</text>
<text x="1113.90" y="2096.20" font-size="36" fill="#f2f2f2" stroke="#f2f2f2" stroke-width="0.7" textLength="785.94" lengthAdjust="spacingAndGlyphs">neque at sem venenatis eleifend. Ut nonummy.</text>
</svg>
</body></html>
